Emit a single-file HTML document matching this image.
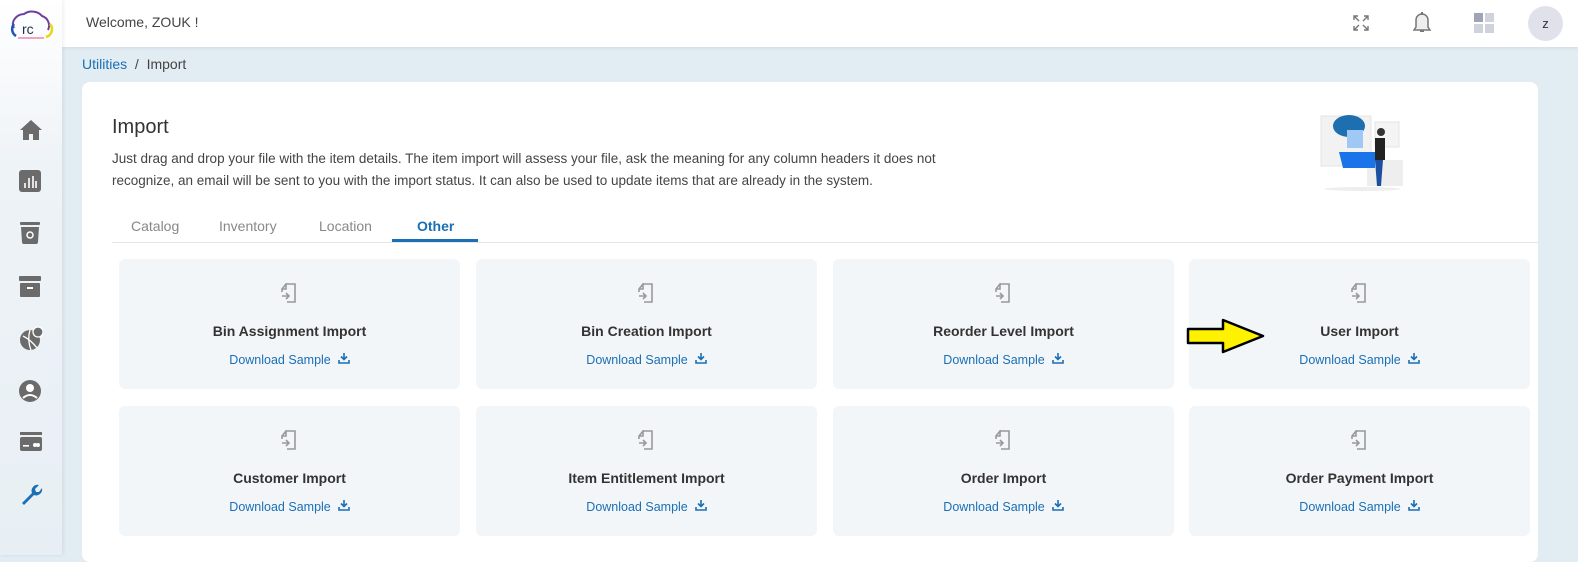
<!DOCTYPE html>
<html><head><meta charset="utf-8"><style>
*{box-sizing:border-box;margin:0;padding:0}
body{width:1578px;height:555px;overflow:hidden;background:#e2ecf3;font-family:"Liberation Sans",sans-serif;position:relative}
.side{position:absolute;left:0;top:0;width:62px;height:555px;background:linear-gradient(#fff,#eef3f7 30%,#e8eff4);box-shadow:1px 0 4px rgba(0,0,0,.08);z-index:2}
.head{position:absolute;left:62px;top:0;right:0;height:47px;background:#fff;box-shadow:0 1px 4px rgba(0,0,0,.08)}
.crumb{position:absolute;left:82px;top:56px;font-size:14px;color:#444}
.crumb a{color:#1a6fb5}
.card{position:absolute;left:82px;top:82px;width:1456px;height:480px;background:#fff;border-radius:8px}
.tile{position:absolute;width:341px;height:130px;background:#f3f6f9;border-radius:6px;text-align:center}
.tile svg.f{position:absolute;left:162px;top:24px}
.tile .t{position:absolute;top:64px;width:100%;font-size:14px;font-weight:bold;color:#333}
.tile .d{position:absolute;top:93px;width:100%;font-size:12.5px;color:#1a6fb5}
.ico{position:absolute;left:19px}
</style></head><body>
<div class="side">
<svg style="position:absolute;left:6px;top:6px" width="50" height="36" viewBox="0 0 50 36"><path d="M8 22 A12 10 0 0 1 18 8 A12 10 0 0 1 36 10 A10 10 0 0 1 42 24" fill="none" stroke="#6c3fa0" stroke-width="2"/><path d="M8 18 A8 8 0 0 0 10 30" fill="none" stroke="#1d57b0" stroke-width="2.5"/><path d="M44 18 A8 8 0 0 1 40 31" fill="none" stroke="#e8d80f" stroke-width="2.5"/><path d="M12 32 L38 32" stroke="#e05080" stroke-width="1"/><text x="16" y="28" font-size="14" fill="#234" font-family="Liberation Sans">rc</text></svg>
<svg class="ico" style="top:119px" width="24" height="22" viewBox="0 0 24 22"><path d="M12 1 L23 11 H20 V21 H14 V15 H10 V21 H4 V11 H1Z" fill="#6b6b6b"/></svg>
<svg class="ico" style="top:170px" width="22" height="22"><rect width="22" height="22" rx="3" fill="#6b6b6b"/><path d="M6 18V13M10 18V8M14 18V6M17 18V11" stroke="#fff" stroke-width="1.6"/></svg>
<svg class="ico" style="top:222px" width="22" height="22"><rect x="1" y="0" width="20" height="3" rx="1" fill="#6b6b6b"/><path d="M2 5H20L19 20Q19 22 17 22H5Q3 22 3 20Z" fill="#6b6b6b"/><circle cx="11" cy="13" r="3" fill="none" stroke="#fff" stroke-width="1.5"/></svg>
<svg class="ico" style="top:275px" width="22" height="22"><rect x="0" y="1" width="22" height="5" rx="1" fill="#6b6b6b"/><rect x="1" y="8" width="20" height="14" rx="1" fill="#6b6b6b"/><rect x="8" y="12" width="6" height="2" fill="#fff"/></svg>
<svg class="ico" style="top:326px" width="24" height="26"><circle cx="11" cy="14" r="10" fill="#6b6b6b"/><path d="M4 10 Q12 14 18 22M11 4 Q8 14 12 24" stroke="#fff" stroke-width="1.3" fill="none"/><circle cx="19" cy="6" r="5" fill="#6b6b6b" stroke="#fff" stroke-width="1.3"/></svg>
<svg class="ico" style="top:379px" width="22" height="24"><circle cx="11" cy="12" r="11" fill="#6b6b6b"/><circle cx="11" cy="9" r="4" fill="#fff"/><path d="M4 19 Q11 13 18 19" stroke="#fff" stroke-width="2" fill="none"/></svg>
<svg class="ico" style="top:432px" width="24" height="20"><rect x="1" y="0" width="22" height="3" fill="#6b6b6b"/><rect x="1" y="5" width="22" height="14" rx="2" fill="#6b6b6b"/><rect x="4" y="13" width="6" height="1.6" fill="#fff"/><circle cx="16" cy="13" r="2" fill="#fff"/><circle cx="19" cy="13" r="2" fill="#fff"/></svg>
<svg class="ico" style="top:482px" width="24" height="24" viewBox="0 0 24 24"><path d="M3 21 L13 11 A6 6 0 0 1 20 3 L16 7 L17 10 L20 10 L23 6 A6 6 0 0 1 15 13 L5 23Z" fill="#1a6fb5"/></svg>
</div>
<div class="head">
<div style="position:absolute;left:24px;top:14px;font-size:14px;color:#444">Welcome, ZOUK !</div>
<svg style="position:absolute;left:1290px;top:14px" width="18" height="18" viewBox="0 0 18 18" fill="none" stroke="#777" stroke-width="1.4"><path d="M2 6V2H6M2 2L7 7M12 2H16V6M16 2L11 7M2 12V16H6M2 16L7 11M16 12V16H12M16 16L11 11"/></svg>
<svg style="position:absolute;left:1350px;top:12px" width="20" height="22" viewBox="0 0 20 22"><path d="M10 2 A6 6 0 0 1 16 8V15L18 18H2L4 15V8A6 6 0 0 1 10 2Z" fill="#eee" stroke="#777" stroke-width="1.5"/><rect x="9" y="0" width="2" height="3" fill="#777"/><path d="M8 19H12" stroke="#777" stroke-width="2"/></svg>
<svg style="position:absolute;left:1412px;top:13px" width="21" height="21"><rect width="9" height="9" fill="#a0a4b8"/><rect x="11" width="9" height="9" fill="#d0d3dc"/><rect y="11" width="9" height="9" fill="#d0d3dc"/><rect x="11" y="11" width="9" height="9" fill="#d0d3dc"/></svg>
<div style="position:absolute;left:1466px;top:6px;width:35px;height:35px;border-radius:50%;background:#e1e1ec;font-size:13px;color:#333;text-align:center;line-height:35px">z</div>
</div>
<div class="crumb"><a>Utilities</a> &nbsp;/&nbsp; Import</div>
<div class="card">
<div style="position:absolute;left:30px;top:34px;font-size:20px;color:#333">Import</div>
<div style="position:absolute;left:30px;top:66px;width:860px;font-size:13.5px;line-height:22px;color:#444">Just drag and drop your file with the item details. The item import will assess your file, ask the meaning for any column headers it does not recognize, an email will be sent to you with the import status. It can also be used to update items that are already in the system.</div>
<svg style="position:absolute;left:1237px;top:30px" width="86" height="80" viewBox="0 0 86 80"><rect x="2" y="4" width="50" height="50" fill="#f2f2f2" stroke="#e4e4e4"/><rect x="56" y="10" width="24" height="25" fill="#f4f4f4" stroke="#e4e4e4"/><rect x="48" y="48" width="36" height="26" fill="#eee"/><ellipse cx="30" cy="14" rx="16" ry="11" fill="#1e6fb0"/><rect x="28" y="18" width="16" height="18" fill="#9fc8f5"/><path d="M20 40H56V56H24Z" fill="#1a73e8"/><circle cx="62" cy="20" r="4" fill="#333"/><path d="M56 26H66V48H56Z" fill="#222"/><path d="M56 48H64L62 74H58Z" fill="#1d4fa0"/><ellipse cx="43" cy="77" rx="38" ry="2" fill="#eee"/></svg>
<div style="position:absolute;left:30px;top:160px;right:0;border-bottom:1px solid #e3e6ea;height:1px"></div>
<div style="position:absolute;top:136px;left:49px;font-size:14px;color:#888">Catalog</div>
<div style="position:absolute;top:136px;left:137px;font-size:14px;color:#888">Inventory</div>
<div style="position:absolute;top:136px;left:237px;font-size:14px;color:#888">Location</div>
<div style="position:absolute;top:136px;left:335px;font-size:14px;color:#1a6fb5;font-weight:bold">Other</div>
<div style="position:absolute;top:157px;left:310px;width:86px;height:3px;background:#1a6fb5"></div>
</div>
<div id="tiles"></div>
<script>
var n=["Bin Assignment Import","Bin Creation Import","Reorder Level Import","User Import","Customer Import","Item Entitlement Import","Order Import","Order Payment Import"],xs=[119,476,833,1189],h="";
n.forEach(function(t,i){h+='<div class="tile" style="left:'+xs[i%4]+'px;top:'+(i<4?259:406)+'px"><svg class="f" width="16" height="20" viewBox="0 0 16 20" fill="none" stroke="#999" stroke-width="1.6"><path d="M5 1H14V19H6M1 9V6L5 1V6H1"/><path d="M1 13H8M5 10L8 13L5 16"/></svg><div class="t">'+t+'</div><div class="d">Download Sample &nbsp;<svg width="12" height="12" viewBox="0 0 12 12" fill="none" stroke="#1a6fb5" stroke-width="1.6"><path d="M6 1V7M3 4.5L6 7.5L9 4.5M1 8V11H11V8"/></svg></div></div>'});
document.getElementById("tiles").innerHTML=h;
</script>
<svg style="position:absolute;left:1186px;top:318px" width="80" height="36" viewBox="0 0 80 36"><path d="M2 11H37V2L77 18L37 34V25H2Z" fill="#fff200" stroke="#000" stroke-width="2.5" stroke-linejoin="round"/></svg>
</body></html>
